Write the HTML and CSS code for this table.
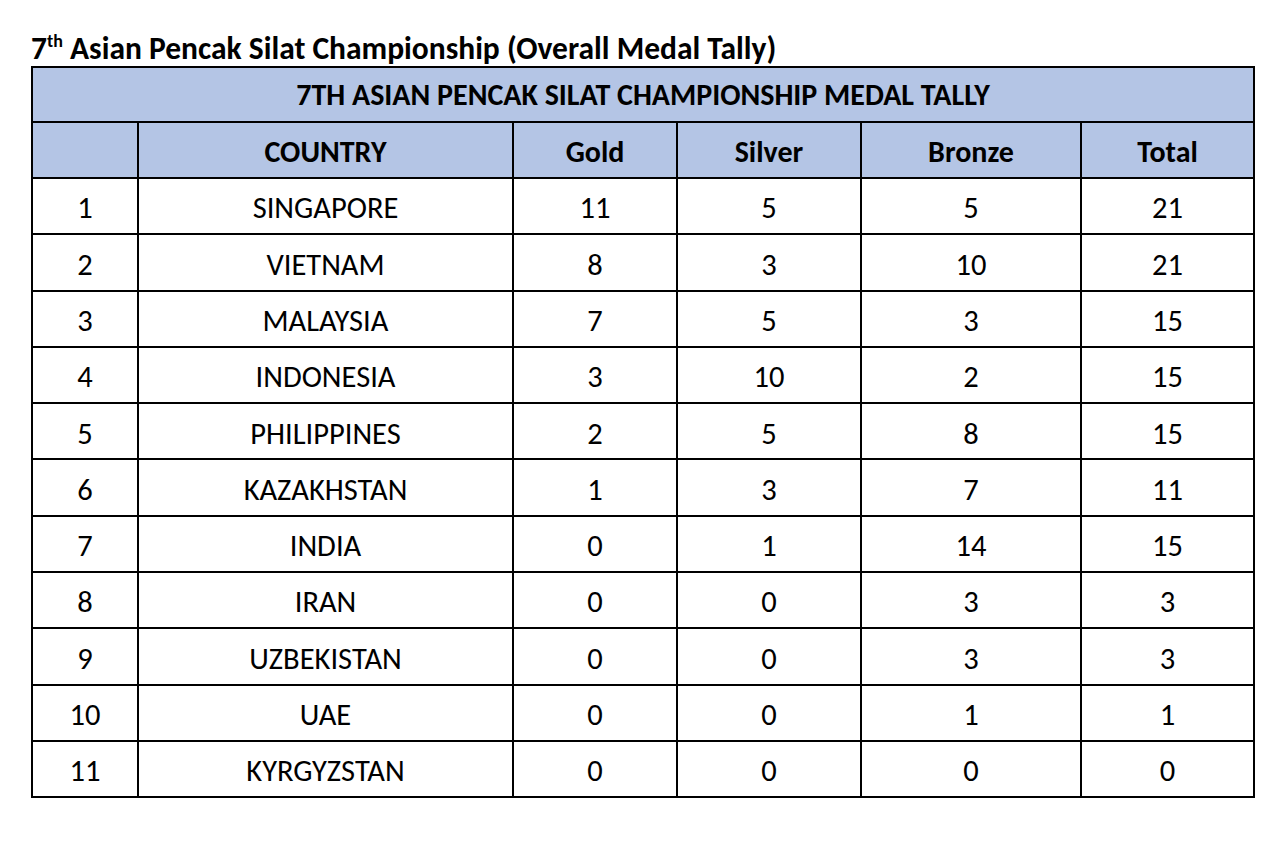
FILE: index.html
```html
<!DOCTYPE html>
<html>
<head>
<meta charset="utf-8">
<link rel="stylesheet" href="styles.css">
</head>
<body>
<div class="page">
  <h1 class="title">7<sup>th</sup> Asian Pencak Silat Championship (Overall Medal Tally)</h1>
  <table class="tally">
    <colgroup>
      <col class="c-rank"><col class="c-country"><col class="c-gold"><col class="c-silver"><col class="c-bronze"><col class="c-total">
    </colgroup>
    <thead>
      <tr class="head-main"><th colspan="6">7TH ASIAN PENCAK SILAT CHAMPIONSHIP MEDAL TALLY</th></tr>
      <tr class="head-cols"><th></th><th>COUNTRY</th><th>Gold</th><th>Silver</th><th>Bronze</th><th>Total</th></tr>
    </thead>
    <tbody>
      <tr><td>1</td><td>SINGAPORE</td><td>11</td><td>5</td><td>5</td><td>21</td></tr>
      <tr><td>2</td><td>VIETNAM</td><td>8</td><td>3</td><td>10</td><td>21</td></tr>
      <tr><td>3</td><td>MALAYSIA</td><td>7</td><td>5</td><td>3</td><td>15</td></tr>
      <tr><td>4</td><td>INDONESIA</td><td>3</td><td>10</td><td>2</td><td>15</td></tr>
      <tr><td>5</td><td>PHILIPPINES</td><td>2</td><td>5</td><td>8</td><td>15</td></tr>
      <tr><td>6</td><td>KAZAKHSTAN</td><td>1</td><td>3</td><td>7</td><td>11</td></tr>
      <tr><td>7</td><td>INDIA</td><td>0</td><td>1</td><td>14</td><td>15</td></tr>
      <tr><td>8</td><td>IRAN</td><td>0</td><td>0</td><td>3</td><td>3</td></tr>
      <tr><td>9</td><td>UZBEKISTAN</td><td>0</td><td>0</td><td>3</td><td>3</td></tr>
      <tr><td>10</td><td>UAE</td><td>0</td><td>0</td><td>1</td><td>1</td></tr>
      <tr><td>11</td><td>KYRGYZSTAN</td><td>0</td><td>0</td><td>0</td><td>0</td></tr>
    </tbody>
  </table>
</div>
</body>
</html>
```
FILE: styles.css
```css
html, body {
  margin: 0;
  padding: 0;
  background: #ffffff;
}
body {
  font-family: Carlito, Calibri, Lato, "Liberation Sans", sans-serif;
  color: #000;
}
.page {
  padding: 30px 0 0 31px;
}
.title {
  margin: 0;
  font-size: 31.5px;
  font-weight: 700;
  line-height: 36px;
  height: 36px;
  white-space: nowrap;
}
.title sup {
  font-size: 18px;
  line-height: 0;
  vertical-align: 12px;
}
.tally {
  border-collapse: collapse;
  table-layout: fixed;
  width: 1222px;
  font-size: 30.5px;
}
.c-rank { width: 106px; }
.c-country { width: 375px; }
.c-gold { width: 164px; }
.c-silver { width: 184px; }
.c-bronze { width: 220px; }
.c-total { width: 173px; }
.tally th, .tally td {
  border: 2px solid #000;
  text-align: center;
  padding: 0;
  line-height: 1;
}
.tally th {
  background: #b4c5e5;
  font-weight: 700;
  font-size: 30px;
}
.head-main th { height: 52px; padding-top: 1px; }
.head-cols th { height: 51px; padding-top: 3px; }
.tally td { height: 49.3px; padding-top: 5px; font-weight: 400; }
```
